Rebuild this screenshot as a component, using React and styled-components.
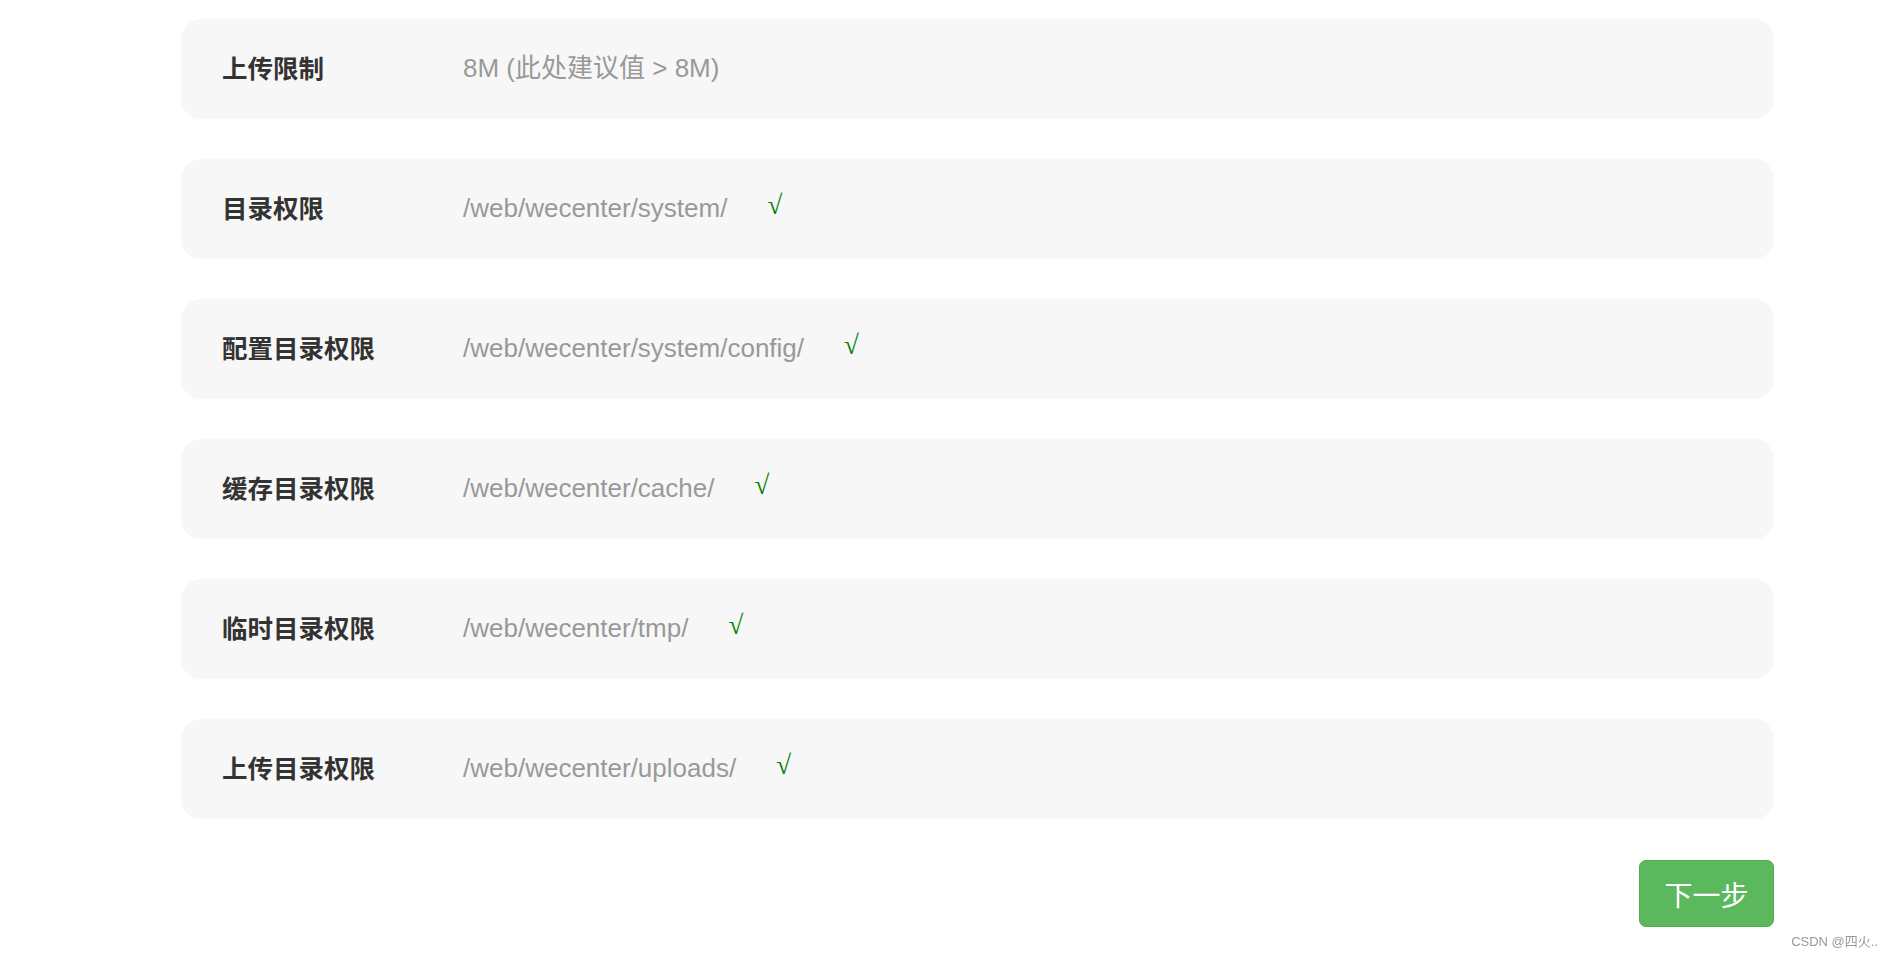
import React from "react";
import styled, { createGlobalStyle } from "styled-components";

const rows = [
  { label: "上传限制", value: "8M (此处建议值 > 8M)", ok: false },
  { label: "目录权限", value: "/web/wecenter/system/", ok: true },
  { label: "配置目录权限", value: "/web/wecenter/system/config/", ok: true },
  { label: "缓存目录权限", value: "/web/wecenter/cache/", ok: true },
  { label: "临时目录权限", value: "/web/wecenter/tmp/", ok: true },
  { label: "上传目录权限", value: "/web/wecenter/uploads/", ok: true },
];

const App = () => {
  return (
    <>
      <GlobalStyle />
      <Page>
        <List>
          {rows.map((row) => (
            <Row key={row.label}>
              <Label>{row.label}</Label>
              <Value>
                {row.value}
                {row.ok && <Check>√</Check>}
              </Value>
            </Row>
          ))}
        </List>
        <Footer>
          <NextButton type="button">下一步</NextButton>
        </Footer>
      </Page>
      <Watermark>CSDN @四火..</Watermark>
    </>
  );
};

const GlobalStyle = createGlobalStyle`
  html, body {
    margin: 0;
    padding: 0;
    background: #fff;
  }
  body {
    font-family: "Liberation Sans", "Noto Sans CJK SC", sans-serif;
    overflow: hidden;
  }
`;

const Page = styled.div`
  width: 1593px;
  margin-left: 181px;
  padding-top: 19px;
`;

const List = styled.div`
  display: flex;
  flex-direction: column;
  gap: 40px;
`;

const Row = styled.div`
  display: flex;
  align-items: center;
  height: 100px;
  padding-left: 41px;
  background: #f7f7f7;
  border-radius: 20px;
`;

const Label = styled.div`
  width: 241px;
  flex-shrink: 0;
  margin-top: -5px;
  font-family: "Noto Sans CJK SC", sans-serif;
  font-size: 25.5px;
  line-height: 1;
  font-weight: 700;
  color: #333;
`;

const Value = styled.div`
  display: flex;
  align-items: center;
  height: 30px;
  margin-top: -3px;
  font-size: 26px;
  line-height: 30px;
  color: #999;
`;

const Check = styled.span`
  margin-left: 40px;
  margin-top: -6px;
  font-family: "Liberation Serif", serif;
  font-size: 27px;
  color: #008000;
`;

const Footer = styled.div`
  display: flex;
  justify-content: flex-end;
  margin-top: 41px;
`;

const NextButton = styled.button`
  width: 135px;
  height: 67px;
  padding: 0;
  background: #5cb85c;
  border: 1px solid #4cae4c;
  border-radius: 7px;
  color: #fff;
  font-family: "Noto Sans CJK SC", sans-serif;
  font-size: 28px;
  cursor: pointer;
`;

const Watermark = styled.div`
  position: fixed;
  right: 13px;
  bottom: 10px;
  font-size: 13px;
  color: #999;
`;

export default App;
